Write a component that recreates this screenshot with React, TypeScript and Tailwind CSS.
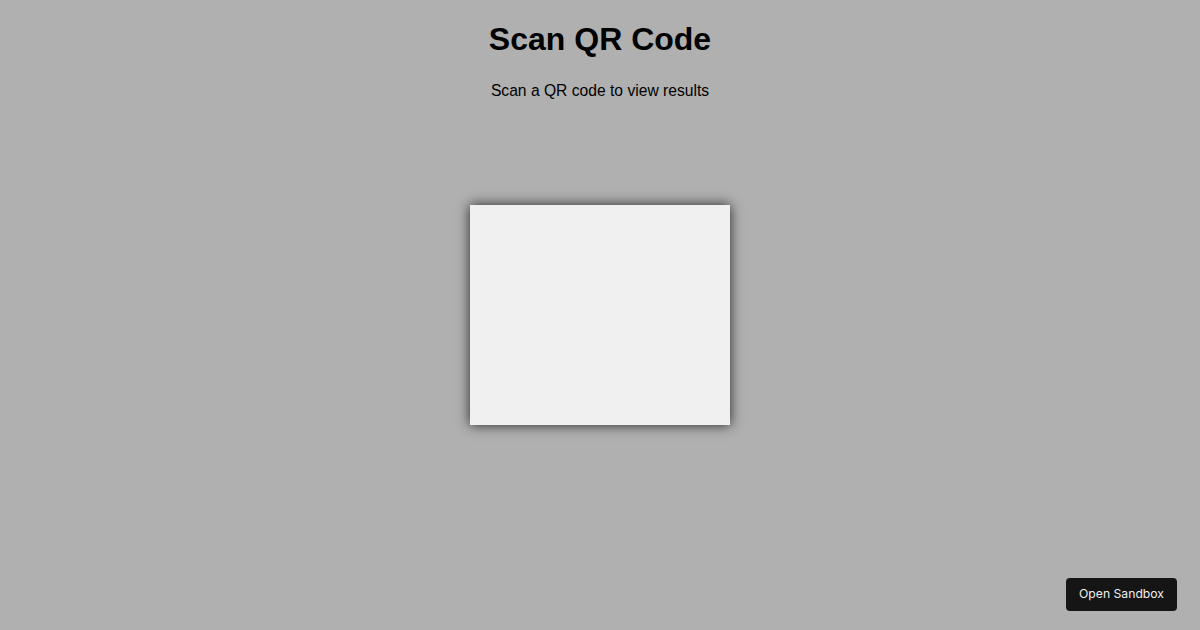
export default function App() {
  return (
    <div className="relative h-[630px] w-full overflow-hidden bg-[#b0b0b0] font-['Liberation_Sans',Arial,sans-serif] text-black">
      <div className="flex flex-col items-center">
        <h1 className="mt-[21px] text-[32px] font-bold leading-[37px]">Scan QR Code</h1>
        <p className="mt-[24px] text-[15.65px] leading-[18px]">Scan a QR code to view results</p>
        <div className="mt-[105px] h-[220px] w-[260px] bg-[#f0f0f0] shadow-[0_0_12px_rgba(0,0,0,0.8)]" />
      </div>

      {/* sandbox button */}
      <button className="absolute bottom-[19px] right-[23px] flex h-[33px] w-[111px] items-center justify-center rounded-[4px] bg-[#151515] text-[12.2px] text-[#f0f0f0] font-['Inter',sans-serif]">
        Open Sandbox
      </button>
    </div>
  );
}
